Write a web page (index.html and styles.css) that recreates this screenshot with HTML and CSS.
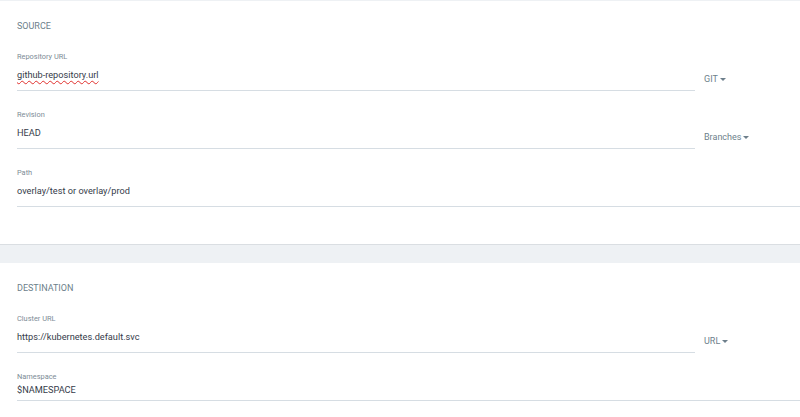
FILE: index.html
```html
<!DOCTYPE html>
<html lang="en">
<head>
    <meta charset="UTF-8">
    <meta name="viewport" content="width=device-width, initial-scale=1.0">
    <title>New Application</title>
    <link rel="stylesheet" href="styles.css">
</head>
<body>
    <div class="card">
        <h2 class="card-title">Source</h2>

        <div class="row">
            <div class="field">
                <label class="field-label">Repository URL</label>
                <div class="field-value"><span class="misspelled">github-repository.url</span></div>
            </div>
            <div class="dropdown">GIT <svg class="caret" width="6" height="3" viewBox="0 0 6 3"><path d="M0 0h6L3 3z"/></svg></div>
        </div>

        <div class="row">
            <div class="field">
                <label class="field-label">Revision</label>
                <div class="field-value">HEAD</div>
            </div>
            <div class="dropdown">Branches <svg class="caret" width="6" height="3" viewBox="0 0 6 3"><path d="M0 0h6L3 3z"/></svg></div>
        </div>

        <div class="field">
            <label class="field-label">Path</label>
            <div class="field-value">overlay/test or overlay/prod</div>
        </div>
    </div>

    <div class="card">
        <h2 class="card-title">Destination</h2>

        <div class="row">
            <div class="field">
                <label class="field-label">Cluster URL</label>
                <div class="field-value">https://kubernetes.default.svc</div>
            </div>
            <div class="dropdown">URL <svg class="caret" width="6" height="3" viewBox="0 0 6 3"><path d="M0 0h6L3 3z"/></svg></div>
        </div>

        <div class="field field-compact">
            <label class="field-label">Namespace</label>
            <div class="field-value">$NAMESPACE</div>
        </div>
    </div>
</body>
</html>
```

FILE: styles.css
```css
body {
    margin: 0;
    padding-top: 1px;
    background-color: #eef1f4;
    font-family: Roboto, "Liberation Sans", sans-serif;
    color: #363c4a;
}
.card {
    background-color: #fff;
    padding: 19px 0 37px 17px;
    box-shadow: 0 1px 0 #dadee2;
}
.card + .card {
    margin-top: 19px;
}
.card-title {
    margin: 0 0 20px;
    font-size: 9px;
    line-height: 12px;
    font-weight: 400;
    text-transform: uppercase;
    color: #6d7f8b;
}
.row {
    display: grid;
    grid-template-columns: 1fr 105px;
}
.field + .row,
.row + .row,
.row + .field,
.field + .field {
    margin-top: 19px;
}
.field-label {
    display: block;
    font-size: 7.4px;
    line-height: 10px;
    color: #7d8c96;
    margin-bottom: 6px;
}
.field-value {
    font-size: 9.2px;
    line-height: 14px;
    padding-bottom: 8px;
    border-bottom: 1px solid #d6dde3;
}
.field-compact .field-label {
    margin-bottom: 1px;
}
.field-compact .field-value {
    padding-bottom: 3px;
}
.misspelled {
    text-decoration: underline wavy #e0302d;
    text-decoration-thickness: 1px;
    text-underline-offset: 2px;
}
.dropdown {
    align-self: end;
    padding: 0 0 5px 9px;
    font-size: 9px;
    line-height: 14px;
    color: #6d7f8b;
    display: flex;
    align-items: center;
    gap: 2px;
}
.caret {
    fill: #6d7f8b;
}
```
